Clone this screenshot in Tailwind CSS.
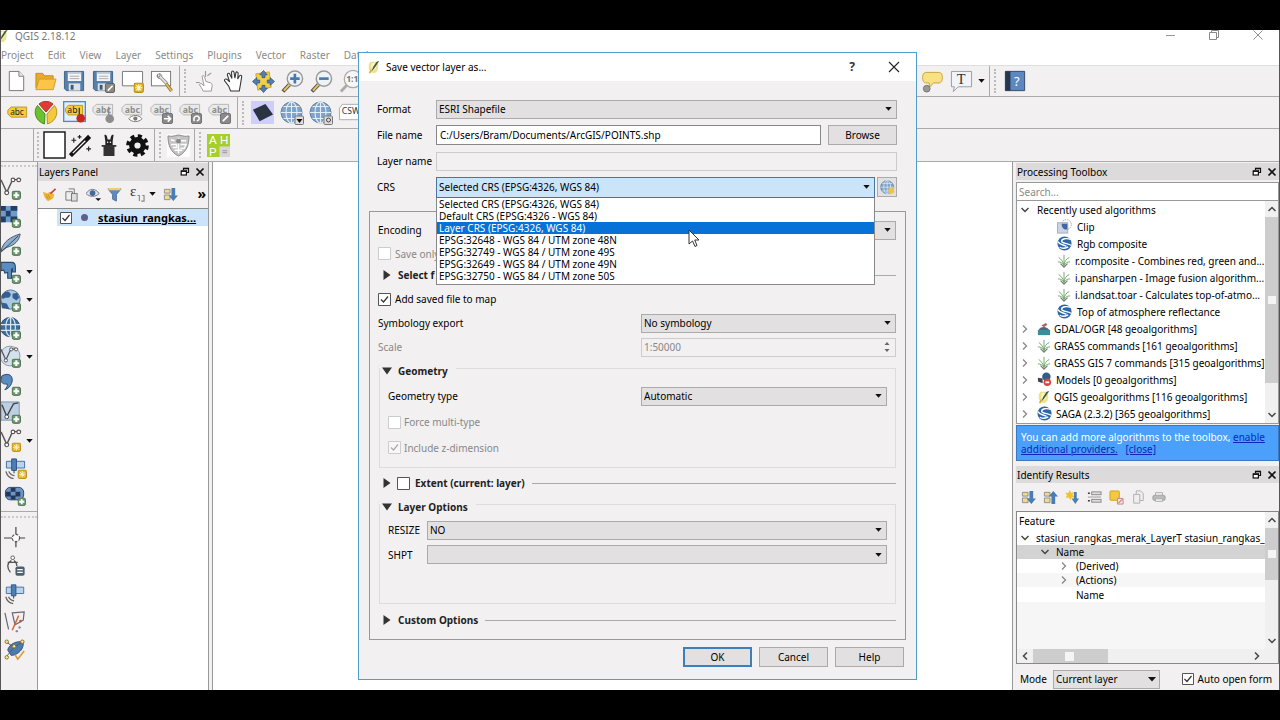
<!DOCTYPE html>
<html lang="en">
<head>
<meta charset="utf-8">
<title>QGIS 2.18.12</title>
<script src="https://cdn.jsdelivr.net/npm/@tailwindcss/browser@4"></script>
</head>
<body class="bg-black font-['Noto_Sans','Open_Sans',sans-serif] text-[10px] leading-[14px] text-black">

<svg class="hidden" aria-hidden="true">
  <symbol id="dn" viewBox="0 0 8 5"><path d="M0 0h8L4 4.6z" fill="#111"/></symbol>
  <symbol id="tri-r" viewBox="0 0 8 10"><path d="M.5 0v10L7.500 5z" fill="#333"/></symbol>
  <symbol id="tri-d" viewBox="0 0 10 8"><path d="M0 .5h10L5 7.500z" fill="#333"/></symbol>
  <symbol id="ch-r" viewBox="0 0 8 8"><path d="M2 .5l3.500 3.500L2 7.500" fill="none" stroke="#888" stroke-width="1.300"/></symbol>
  <symbol id="ch-d" viewBox="0 0 8 8"><path d="M.5 2L4 5.500 7.500 2" fill="none" stroke="#444" stroke-width="1.500"/></symbol>
  <symbol id="ch-u" viewBox="0 0 8 8"><path d="M.5 6L4 2.500 7.500 6" fill="none" stroke="#444" stroke-width="1.500"/></symbol>
  <symbol id="ch-l" viewBox="0 0 8 8"><path d="M6 .5L2.500 4 6 7.500" fill="none" stroke="#444" stroke-width="1.500"/></symbol>
  <symbol id="ch-rd" viewBox="0 0 8 8"><path d="M2 .5L5.500 4 2 7.500" fill="none" stroke="#444" stroke-width="1.500"/></symbol>
  <symbol id="close" viewBox="0 0 10 10"><path d="M1.500 1.500l7 7M8.500 1.500l-7 7" stroke="#111" stroke-width="1.700"/></symbol>
  <symbol id="float" viewBox="0 0 10 10"><path d="M3.500 3V1.500h5v4H7" fill="none" stroke="#111" stroke-width="1.200"/><path d="M3 1.500h6" stroke="#111" stroke-width="1.600"/><rect x="1.200" y="4" width="5.200" height="4" fill="#fff" stroke="#111" stroke-width="1.200"/><path d="M1 4.200h6" stroke="#111" stroke-width="1.500"/></symbol>
  <symbol id="q" viewBox="0 0 16 16"><path d="M4 2h6l3 3-1 7-3 3-5-1-2-4 0-5z" fill="#f1e08a"/><path d="M5 4l3-1 3 2-1 5-3 2-2-3z" fill="#fbf6c8"/><path d="M14 1l-3 1-4 6-2 5 3-3z" fill="#3d5b34"/><path d="M5 11l-2 4" stroke="#d2a92d" stroke-width="1.800"/></symbol>

  <symbol id="plus" viewBox="0 0 10 10"><rect x=".7" y=".7" width="8.600" height="8.600" rx="1.800" fill="#6d9a70" stroke="#4a6c49"/><path d="M5 2v6M2 5h6" stroke="#fff" stroke-width="2.200"/></symbol>
  <symbol id="star" viewBox="0 0 10 10"><rect x=".6" y=".6" width="8.800" height="8.800" rx="1.500" fill="#e3b52c" stroke="#b88a14"/><path d="M5 1.600v6.800M1.600 5h6.800M2.600 2.600l4.800 4.800M7.400 2.600L2.600 7.400" stroke="#fff6c4" stroke-width="1"/></symbol>

  <symbol id="new" viewBox="0 0 24 24"><path d="M4.500 1.500h10l5 5v15h-15z" fill="#fff" stroke="#777"/><path d="M14.500 1.500v5h5" fill="#eee" stroke="#777"/></symbol>
  <symbol id="open" viewBox="0 0 24 24"><path d="M2 19V3.500h7l2 2.500h9V10" fill="#e8a92c" stroke="#c78c1f"/><path d="M2 20.500L5.500 9.500H23l-3 11z" fill="#fbc648" stroke="#d59b25"/></symbol>
  <symbol id="save" viewBox="0 0 24 24"><path d="M1.500 1.500h20v20h-18l-2-2z" fill="#5580ac" stroke="#3f6488"/><rect x="5" y="2" width="14" height="9.500" fill="#f5f5f5"/><path d="M5 2h14v2H5z" fill="#b9c7d6"/><path d="M7 6.500h10M7 9h10" stroke="#aaa"/><rect x="6" y="14" width="12" height="7.500" fill="#dfe3e8"/><rect x="8" y="15.500" width="3" height="5" fill="#3f5a75"/></symbol>
  <symbol id="saveas" viewBox="0 0 24 24"><use href="#save"/><rect x="14" y="14" width="9.500" height="9.500" rx="1.500" fill="#8a8a85" stroke="#5f5f5a"/><path d="M16.500 21.500l5-5" stroke="#fff" stroke-width="1.600"/></symbol>
  <symbol id="composer" viewBox="0 0 24 24"><path d="M1.500 1.500h21v12l-4 3h-17z" fill="#fff" stroke="#777"/><use href="#star" x="13" y="13" width="11" height="11"/></symbol>
  <symbol id="manager" viewBox="0 0 24 24"><rect x="1.500" y="1.500" width="20" height="15" fill="#fff" stroke="#777"/><path d="M8 4.500c-1.500 2 0 4.500 2.500 4.500l6 6 2-2-6-6c0-2-2-4-3.500-3l1.500 2-1 1.500-1.500-.5z" fill="#ddd" stroke="#666" stroke-width=".8"/><path d="M17 14.500l5.500 7.500" stroke="#8b6a2a" stroke-width="3.400"/><path d="M17 14.500l5.500 7.500" stroke="#e2be59" stroke-width="1.800"/></symbol>
  <symbol id="touch" viewBox="0 0 24 24"><path d="M9.500 22c-1-3-3-5-4-7l2-1 3 2.500L8.500 7c0-1.500 2-1.800 2.400 0l1.600 5 5 1.500c1.500.8 1.500 2 1.300 3.500l-.8 5z" fill="#fff" stroke="#999"/><path d="M2 13h4M12 1v6M14 6l4-3" stroke="#999" stroke-width="1.200"/></symbol>
  <symbol id="hand" viewBox="0 0 24 24"><path d="M8 22l-2-5-4.500-6c0-2 2-2 3-1l2.500 2.500L4.500 5c0-2 2-2.200 2.700-.5L9.300 9 8.900 2.500c.2-2 2.300-2 2.600 0l.9 6 1-5.500c.5-1.600 2.600-1.200 2.400.5L15.300 9.500l2-3.500c1-1 2.700-.3 2.200 1L18.200 15 17 22z" fill="#fff" stroke="#333" stroke-width="1.100"/></symbol>
  <symbol id="pan" viewBox="0 0 24 24"><path d="M4 4l14-2 2 16-14 3z" fill="#f0cf4b" stroke="#c8a52c"/><path d="M12 .5l4 4.500h-2.500v3h-3V5H8zM12 23.500L8 19h2.500v-3h3v3H16zM.5 12L5 8v2.500h3v3H5V16zM23.500 12L19 16v-2.500h-3v-3h3V8z" fill="#557fb0" stroke="#36557c" stroke-width=".8"/></symbol>
  <symbol id="lens" viewBox="0 0 24 24"><path d="M9 15l-7 7.500" stroke="#555" stroke-width="4"/><path d="M9 15l-6 6.500" stroke="#e6c85c" stroke-width="2.200"/><circle cx="14.500" cy="9" r="8" fill="#eef3f8" stroke="#999" stroke-width="1.500"/></symbol>
  <symbol id="zin" viewBox="0 0 24 24"><use href="#lens"/><path d="M14.500 4v10M9.500 9h10" stroke="#4d79a8" stroke-width="2.800"/></symbol>
  <symbol id="zout" viewBox="0 0 24 24"><use href="#lens"/><path d="M9.500 9h10" stroke="#4d79a8" stroke-width="2.800"/></symbol>
  <symbol id="zone" viewBox="0 0 24 24"><path d="M9 15l-7 7.500" stroke="#aaa" stroke-width="3"/><circle cx="14.500" cy="9.500" r="9" fill="#f7f7f7" stroke="#aaa" stroke-width="1.300"/><text x="7.500" y="13" font-size="9" font-weight="bold" fill="#777">1:1</text></symbol>
  <symbol id="bubble" viewBox="0 0 24 24"><path d="M5 2.500h14c4.500 0 4.500 11 0 11h-6l-4 4.500-.5-4.500H5c-4.500 0-4.500-11 0-11z" fill="#f7e183" stroke="#c9a53a"/><circle cx="6" cy="19.500" r="3.500" fill="#999" stroke="#777"/></symbol>
  <symbol id="textnote" viewBox="0 0 24 24"><path d="M1.500 1.500h21v16h-14l-5 5 1-5h-3z" fill="#f0f3f8" stroke="#99a"/><text x="7" y="14.500" font-size="15" font-family="Liberation Serif, serif" fill="#333">T</text></symbol>
  <symbol id="book" viewBox="0 0 24 24"><path d="M1.500 1.500h21v21h-21z" fill="#5b88c0" stroke="#33445c"/><path d="M1.500 1.500H7v21H1.500z" fill="#26364d"/><text x="11" y="17" font-size="14" fill="#fff">?</text></symbol>

  <symbol id="tag" viewBox="0 0 24 24"><path d="M5.500 5.500h17v11h-17L2 13v-4z" fill="#f7cd38" stroke="#b8952a"/><text x="4.500" y="14" font-size="9" fill="#222">abc</text></symbol>
  <symbol id="tagg" viewBox="0 0 24 24"><path d="M4.500 3.500h17v11h-17L1 11V7z" fill="#e9e9e9" stroke="#b5b5b5"/><text x="4" y="12" font-size="9" font-weight="bold" fill="#8d8d8d">abc</text></symbol>
  <symbol id="pie" viewBox="0 0 24 24"><path d="M12 11L5 3c4-3.500 10-3.500 14 0z" fill="#e03b30" stroke="#a5352c"/><path d="M11 13L3.500 4.500C-1 10 1 20 10.500 23z" fill="#6cc22c" stroke="#4c8d20"/><path d="M13 13l7.500-8.500C25 10 23 20 13.500 23z" fill="#f5c93c" stroke="#b8952a"/></symbol>
  <symbol id="tagpin" viewBox="0 0 24 24"><rect x=".7" y=".7" width="22.600" height="20.600" fill="#e6eef6" stroke="#4a90c8" stroke-width="1.400"/><path d="M5.500 4.500h15v10h-15L2.500 11V8z" fill="#f7cd38" stroke="#b8952a"/><text x="4.500" y="13" font-size="9" fill="#222">ab</text><path d="M17 7v9" stroke="#333" stroke-width="1.400"/><circle cx="18.500" cy="18" r="4.500" fill="#c8281e"/></symbol>
  <symbol id="tag1" viewBox="0 0 24 24"><use href="#tagg"/><path d="M17.500 6v10" stroke="#888" stroke-width="1.400"/><circle cx="18.500" cy="18.500" r="4.500" fill="#8d8d8d"/></symbol>
  <symbol id="tag2" viewBox="0 0 24 24"><use href="#tagg"/><path d="M8 18.500c3.500-4.500 10.500-4.500 14 0-3.500 4-10.500 4-14 0z" fill="#fff" stroke="#777"/><circle cx="15" cy="18.300" r="2.200" fill="#777"/></symbol>
  <symbol id="sq" viewBox="0 0 24 24"><rect x="13" y="13" width="10.500" height="10.500" rx="1.500" fill="#8a8a8a" stroke="#6e6e6e"/></symbol>
  <symbol id="tag3" viewBox="0 0 24 24"><use href="#tagg"/><use href="#sq"/><path d="M14.500 18.500h6M18.500 15.500l3 3-3 3" stroke="#fff" stroke-width="1.600" fill="none"/></symbol>
  <symbol id="tag4" viewBox="0 0 24 24"><use href="#tagg"/><use href="#sq"/><path d="M16 21c-2-5 4-7 5-3.500.5 2-1 3-2.500 3" stroke="#fff" stroke-width="1.600" fill="none"/></symbol>
  <symbol id="tag5" viewBox="0 0 24 24"><use href="#tagg"/><use href="#sq"/><path d="M15.500 21l5.500-5.500" stroke="#fff" stroke-width="1.800"/></symbol>
  <symbol id="chip" viewBox="0 0 24 24"><path d="M0 0h24v24H0z" fill="#cfcdfb"/><path d="M2 9l13-6 8 11-14 7z" fill="#2b3242"/></symbol>
  <symbol id="globe" viewBox="0 0 24 24"><circle cx="11.500" cy="11.500" r="10.500" fill="#7fa3ca" stroke="#5f7f9f"/><path d="M11.500 1v21M1 11.500h21M3.500 5.500h16M3.500 17.500h16" stroke="#e5eef7" stroke-width="1.100"/><ellipse cx="11.500" cy="11.500" rx="5.500" ry="10.500" fill="none" stroke="#e5eef7" stroke-width="1.100"/></symbol>
  <symbol id="globe1" viewBox="0 0 24 24"><use href="#globe"/><rect x="15" y="15" width="8.500" height="8.500" rx="1" fill="#ddd" stroke="#777"/><path d="M16.500 18h6l-3 4z" fill="#111"/></symbol>
  <symbol id="globe2" viewBox="0 0 24 24"><use href="#globe"/><rect x="15" y="15" width="8.500" height="8.500" rx="1" fill="#ddd" stroke="#777"/><circle cx="19.500" cy="19" r="2" fill="none" stroke="#444"/></symbol>
  <symbol id="csw" viewBox="0 0 24 24"><path d="M4.500 3.500H24v16H1.500v-12z" fill="#fff" stroke="#aaa"/><text x="4" y="14" font-size="9" fill="#333">CSW</text></symbol>

  <symbol id="blank" viewBox="0 0 24 28"><rect x="1" y="1" width="21" height="26" fill="#fff" stroke="#111" stroke-width="1.400"/></symbol>
  <symbol id="wand" viewBox="0 0 24 24"><path d="M1.500 22.500L21.500 2.500" stroke="#111" stroke-width="4.500"/><path d="M4 20L17 7" stroke="#fff" stroke-width="1.300"/><path d="M5 4v5M2.500 6.500h5M11 1v4M9 3h4M20.500 13v5M18 15.500h5" stroke="#222" stroke-width="1.200"/></symbol>
  <symbol id="hat" viewBox="0 0 24 24"><path d="M4 12h16v2h-2v10H6V14H4z" fill="#333"/><path d="M8 12V8L7 1c2-1 3 1 3.500 5h3C14 2 15 0 17 1l-1 7v4z" fill="#222"/><circle cx="10.500" cy="9" r=".8" fill="#fff"/><circle cx="13.500" cy="9" r=".8" fill="#fff"/></symbol>
  <symbol id="gear" viewBox="0 0 24 24"><circle cx="12" cy="12" r="6" fill="none" stroke="#111" stroke-width="5.500"/><circle cx="12" cy="12" r="9.800" fill="none" stroke="#111" stroke-width="4" stroke-dasharray="4.200 3.500"/></symbol>
  <symbol id="shield" viewBox="0 0 24 24"><path d="M0 0h24v24H0z" fill="#fdfdfd"/><path d="M1 2c4 1 6 0 11-1 5 1 7 2 11 1 0 10-3 17-11 21C4 19 1 12 1 2z" fill="#c4c4c4" stroke="#888"/><path d="M4 6l4 1M12 4v16M4 11h6v3H6M14 7h6M14 11h6l-2 4h-4M8 17h8" stroke="#fff" stroke-width="1.500" fill="none"/><circle cx="12" cy="7.500" r="2.500" fill="#888"/></symbol>
  <symbol id="ahp" viewBox="0 0 24 24"><path d="M0 0h24v24H0z" fill="#a6cf2c"/><path d="M13 13h11v11H13z" fill="#d7d7d7"/><g fill="#fff" font-size="12" font-family="Liberation Sans, sans-serif"><text x="2" y="10.500">A</text><text x="13.500" y="10.500">H</text><text x="2" y="22.500">P</text></g><path d="M16 17.500h5M16 19.500h5" stroke="#999"/></symbol>

  <symbol id="vline" viewBox="0 0 24 24"><path d="M0 3l6 13 6-13 6-.5h3" fill="none" stroke="#555" stroke-width="1.500"/><g fill="#fff" stroke="#555" stroke-width="1.200"><circle cx="6" cy="16.500" r="2"/><circle cx="12.500" cy="3" r="1.900"/><circle cx="18.500" cy="3" r="1.900"/></g></symbol>
  <symbol id="l1" viewBox="0 0 24 24"><use href="#vline"/><use href="#plus" x="11" y="14" width="10" height="10"/></symbol>
  <symbol id="l2" viewBox="0 0 24 24"><path d="M0 1h17v17H0z" fill="#6f9bca"/><path d="M0 1h5v5H0zM10 1h7v5h-7zM5 6h5v6H5zM0 12h5v6H0zM10 12h7v6h-7z" fill="#1f3f66"/><use href="#plus" x="11" y="14" width="10" height="10"/></symbol>
  <symbol id="l3" viewBox="0 0 24 24"><path d="M0 19C2 9 10 4 20 1c-1 7-6 12-14 14z" fill="#8fb0cf" stroke="#456"/><path d="M0 20L18 3" stroke="#345"/><use href="#plus" x="11" y="14" width="10" height="10"/></symbol>
  <symbol id="l4" viewBox="0 0 24 24"><path d="M0 1.500h11c3 0 4 2 4 5v5h-3V8l-1 .5V18H7v-6l-3 .5-1-3-3 .5z" fill="#5b8cc0" stroke="#274a70" stroke-width="1.200"/><use href="#plus" x="11" y="14" width="10" height="10"/></symbol>
  <symbol id="l5" viewBox="0 0 24 24"><circle cx="10" cy="11" r="10" fill="#a9c8e4" stroke="#56799c"/><path d="M1 6c4-5 8-4 9-1s-3 5-4 4-4 3-5 0zM12 5l5-1 2 5-3 3-4-3zM0 14l6 1 3 6-8-1z" fill="#355f8c"/><use href="#plus" x="11" y="14" width="10" height="10"/></symbol>
  <symbol id="l6" viewBox="0 0 24 24"><circle cx="9.500" cy="10.500" r="10" fill="#3d6d9e" stroke="#274a70"/><path d="M10 1v20M0 8h20M0 14h20" stroke="#dbe8f4" stroke-width="1.300"/><ellipse cx="10" cy="10.500" rx="5" ry="10" fill="none" stroke="#dbe8f4" stroke-width="1.200"/><use href="#plus" x="11" y="14" width="10" height="10"/></symbol>
  <symbol id="l7" viewBox="0 0 24 24"><circle cx="9.500" cy="11.500" r="10.300" fill="#d3e1ee" stroke="#89a"/><g transform="translate(0 2) scale(.85)"><use href="#vline" width="24" height="24"/></g><use href="#plus" x="11" y="14" width="10" height="10"/></symbol>
  <symbol id="l8" viewBox="0 0 24 24"><path d="M1 3c7-4 13 0 10 8-1.500 3.500-4 5.500-7 6.500 2-2.500 3-4 2.500-6C2 12 0 10 0 7z" fill="#5b8cc0" stroke="#274a70"/><use href="#plus" x="11" y="14" width="10" height="10"/></symbol>
  <symbol id="l9" viewBox="0 0 24 24"><path d="M0 1h19v19H0z" fill="#bcd0e4" stroke="#7d96ae"/><path d="M1 4l5 12L13 3l5-1" fill="none" stroke="#444" stroke-width="1.400"/><circle cx="6" cy="16.500" r="2" fill="#fff" stroke="#444"/><use href="#plus" x="11" y="14" width="10" height="10"/></symbol>
  <symbol id="l10" viewBox="0 0 24 24"><use href="#vline"/><use href="#star" x="11" y="14" width="10" height="10"/></symbol>
  <symbol id="sat" viewBox="0 0 24 24"><path d="M2.500 4.500h19v7h-19z" fill="#b9d3ee" stroke="#456f9c"/><path d="M8 2h5v12H8z" fill="#4d7fb4" stroke="#2d5482"/><path d="M10.500 14v3" stroke="#333"/><path d="M2 15c1 4 4 7 8 7.500M5 15c1 2.500 3 4 6 4.500" fill="none" stroke="#666" stroke-width="1.400"/></symbol>
  <symbol id="l11" viewBox="0 0 24 24"><use href="#sat"/><use href="#star" x="14" y="13" width="10" height="10"/></symbol>
  <symbol id="l12" viewBox="0 0 24 24"><rect x="1.500" y="2.500" width="19" height="13" rx="5" fill="#6f94c4" stroke="#2b4468"/><path d="M7 3h5v4H7zM2 7h5v5H2zM12 7h5v5h-5zM7 11h5v4H7z" fill="#22395c"/><use href="#plus" x="14" y="13" width="9" height="9"/></symbol>
  <symbol id="m1" viewBox="0 0 24 24"><path d="M13 0v8M13 16v6M0 12h9M17 12h6" stroke="#444" stroke-width="1.300"/><circle cx="13" cy="12" r="4" fill="#fff" stroke="#555" stroke-width="1.300" stroke-dasharray="3 1.500"/></symbol>
  <symbol id="m2" viewBox="0 0 24 24"><circle cx="9.500" cy="3" r="2" fill="#fff" stroke="#555"/><path d="M8 6c-5 3-5 8-1 13M11 6c3 2 3 4 3 6M4 8h11" fill="none" stroke="#555" stroke-width="1.400"/><rect x="12.500" y="12.500" width="10" height="10" rx="2" fill="#4f5f70"/><path d="M14.500 16h6M14.500 19h6" stroke="#fff" stroke-width="1.300"/></symbol>
  <symbol id="m4" viewBox="0 0 24 24"><path d="M1 2l4 18M9 2l13-1-1 9-9 5z" fill="none" stroke="#667" stroke-width="1.300"/><path d="M16 5L9 21" stroke="#d06a3a" stroke-width="1.600"/><circle cx="18" cy="11" r="1.500" fill="#b55"/><circle cx="17" cy="18" r="1.300" fill="#88a"/><circle cx="14" cy="22" r="1.300" fill="#88a"/></symbol>
  <symbol id="m5" viewBox="0 0 24 24"><path d="M4 12C6 5 14 2 21 3c1 8-5 14-13 15z" fill="#4c7cae" stroke="#2d5482"/><path d="M2 3l9 6 10-6M2 20l9-11" stroke="#556" fill="none"/><g fill="#f8e6a0" stroke="#8a6d1f"><circle cx="3" cy="3" r="1.900"/><circle cx="20" cy="3" r="1.900"/><circle cx="11" cy="8" r="1.900"/><circle cx="3" cy="20" r="1.900"/></g><path d="M12 17l3 5 7-9" fill="none" stroke="#d99a3a" stroke-width="1.800"/></symbol>

  <symbol id="brush" viewBox="0 0 16 16"><path d="M1 5l5 2 2-2 5 3-1 4-5 3C4 14 2 10 1 5z" fill="#eeb433"/><path d="M4 9l3 4M6 8l3 4" stroke="#c98a1c"/><path d="M14.500 2L9 7" stroke="#c0493f" stroke-width="1.800"/></symbol>
  <symbol id="addgrp" viewBox="0 0 16 16"><path d="M2 5h7v9H2zM5 2h6v9" fill="#eee" stroke="#777"/><rect x="8" y="7" width="6" height="8" fill="#ddd" stroke="#777"/></symbol>
  <symbol id="eye" viewBox="0 0 16 16"><path d="M0 7c4-6 10-6 14 0-4 4-10 4-14 0z" fill="#dce4ee" stroke="#778"/><circle cx="7" cy="6.500" r="3" fill="#446a9a"/><path d="M10 12h6l-3 3z" fill="#111"/></symbol>
  <symbol id="funnel" viewBox="0 0 16 16"><path d="M1 2h14L10 8v7l-4-2V8z" fill="#5b8cc0" stroke="#47709c"/><path d="M1.500 1h13v2.500h-13z" fill="#f0d068"/></symbol>
  <symbol id="eps" viewBox="0 0 16 16"><text x="0" y="10" font-size="16" font-family="Liberation Serif, serif" fill="#333">ε</text><path d="M8 9h2v6M13 9h2v6H12" fill="none" stroke="#888" stroke-width="1.200"/></symbol>
  <symbol id="expand" viewBox="0 0 16 16"><path d="M1.500 2.500h6v4h-6zM1.500 8.500h6v5h-6z" fill="#f3da88" stroke="#8d8d8d"/><path d="M9 1h4v8h3l-5 6-5-6h3z" fill="#4b7db5"/></symbol>
  <symbol id="collapse" viewBox="0 0 16 16"><path d="M1.500 2.500h6v4h-6zM1.500 8.500h6v5h-6z" fill="#f3da88" stroke="#8d8d8d"/><path d="M9 15h4V7h3l-5-6-5 6h3z" fill="#4b7db5"/></symbol>
  <symbol id="expnew" viewBox="0 0 16 16"><path d="M5 0l1.500 3 3-.5L8 5l2 2.500-3 .5-1 3-2-3-3 .5L2 5 0 3l3.500.2z" fill="#f3c22f"/><path d="M9.500 2h3v7H15l-4 6-4-6h2.500z" fill="#4b7db5"/></symbol>
  <symbol id="listic" viewBox="0 0 16 16"><path d="M1 3.500h2M1 11.500h2" stroke="#333" stroke-width="1.500"/><rect x="5" y="2" width="10" height="3" fill="#ddd" stroke="#888"/><rect x="5" y="10" width="10" height="3" fill="#ddd" stroke="#888"/><path d="M1 7.500h14" stroke="#999"/></symbol>
  <symbol id="clr" viewBox="0 0 16 16"><rect x="1" y="1" width="10" height="10" rx="1" fill="#f3c93d" stroke="#cda12c"/><path d="M9 9h6v6H9z" fill="#f7e4e0" stroke="#b88"/><path d="M10 14l4-4" stroke="#c33"/></symbol>
  <symbol id="copy" viewBox="0 0 16 16"><path d="M3 5h7v10H3zM6 5V1h5l3 3v8h-4" fill="#eee" stroke="#aaa"/></symbol>
  <symbol id="print" viewBox="0 0 16 16"><rect x="1" y="6" width="14" height="6" rx="2" fill="#bbb" stroke="#999"/><path d="M4 3h8v3H4zM4 10h8v3H4z" fill="#eee" stroke="#aaa"/></symbol>
  <symbol id="clip" viewBox="0 0 16 16"><circle cx="10" cy="6" r="5.300" fill="#fff" stroke="#99a" stroke-dasharray="1.500 1"/><rect x=".5" y="4" width="11" height="11" fill="#ccd3e2" stroke="#aab"/><path d="M5 5h6v6c-4 1-6-2-6-6z" fill="#4466a0"/></symbol>
  <symbol id="saga" viewBox="0 0 16 16"><circle cx="8" cy="8" r="7.500" fill="#2c66a8"/><path d="M14.500 3.500C10 2 5 3 5 5.500S13 8 15 10M1 6c2 4 6 3 9 5M3 12c3 2 6 1 9-.5" fill="none" stroke="#fff" stroke-width="1.500"/></symbol>
  <symbol id="grass" viewBox="0 0 16 16"><path d="M8 13C7 9 5 6 2 4M8 13V1M8 13c0-4 3-8 6-9M8 13C6 10 4 9 1 9M8 13c2-3 4-4 7-4" fill="none" stroke="#6fa86a" stroke-width="1.100"/><path d="M4 11l4 4 4-4" fill="none" stroke="#777" stroke-width="1.300"/></symbol>
  <symbol id="gdal" viewBox="0 0 16 16"><path d="M1 9h14v6H1z" fill="#3f8a9c"/><path d="M2 9c1-4 9-5 12 0z" fill="#567"/><path d="M5 4l5-3 2 2-4 3z" fill="#a66"/></symbol>
  <symbol id="models" viewBox="0 0 16 16"><circle cx="10" cy="5" r="4.500" fill="#2c5f8c"/><circle cx="11" cy="11" r="4" fill="#d9443a"/><path d="M1 6l5 1v5l-5-2z" fill="#445"/><path d="M9 10h4v2H9z" fill="#fff"/></symbol>
</svg>

<div class="flex min-h-screen flex-col pt-[30px] pb-[30px]">
<div class="relative flex flex-1 flex-col overflow-hidden border-x border-[#555] bg-[#f2f0f1]">

  <!-- Main window title and menu -->
  <header class="bg-white">
    <div class="flex h-[12px] items-center">
      <svg class="h-[14px] w-[9px]" viewBox="7 0 9 16"><use href="#q" width="16" height="16"/></svg>
      <h1 class="ml-[5px] flex-1 text-[10px] leading-[12px] text-[#777]">QGIS 2.18.12</h1>
      <div class="flex items-center gap-[32px] pr-[15px]">
        <button aria-label="Minimize" class="flex"><svg class="h-[12px] w-[10px]" viewBox="0 0 10 12"><path d="M0 5.500h9" stroke="#999"/></svg></button>
        <button aria-label="Restore" class="flex"><svg class="h-[12px] w-[12px]" viewBox="0 0 12 12"><path d="M3.500 2V.5h7v7H8.500M1.500 2.500h7v7h-7z" fill="none" stroke="#888"/></svg></button>
        <button aria-label="Close window" class="flex"><svg class="h-[12px] w-[12px]" viewBox="0 0 12 12"><path d="M1.500 .5l9 9M10.500 .5l-9 9" stroke="#89929c"/></svg></button>
      </div>
    </div>
    <nav class="flex h-[23px] items-center gap-[14px] pt-[3px] text-[#8a8a8a]">
      <button>Project</button><button>Edit</button><button>View</button><button>Layer</button><button>Settings</button><button>Plugins</button><button>Vector</button><button>Raster</button><button>Database</button>
    </nav>
  </header>

  <!-- Toolbars -->
  <div class="flex h-[32px] items-center border-t border-b border-t-[#dedede] border-b-[#aaa] pl-[1px]">
    <button aria-label="New" class="flex w-[29px] justify-center"><svg class="size-[23px]"><use href="#new"/></svg></button>
    <button aria-label="Open" class="flex w-[29px] justify-center"><svg class="size-[23px]"><use href="#open"/></svg></button>
    <button aria-label="Save" class="flex w-[29px] justify-center"><svg class="size-[23px]"><use href="#save"/></svg></button>
    <button aria-label="Save as" class="flex w-[29px] justify-center"><svg class="size-[23px]"><use href="#saveas"/></svg></button>
    <button aria-label="New composer" class="flex w-[29px] justify-center"><svg class="size-[23px]"><use href="#composer"/></svg></button>
    <button aria-label="Composer manager" class="flex w-[29px] justify-center"><svg class="size-[23px]"><use href="#manager"/></svg></button>
    <span class="ml-[3px] h-full w-[5px] border-l border-[#aaa]"></span><span class="mr-[5px] h-[24px] w-[2px] border-l-2 border-dotted border-[#bbb]"></span>
    <button aria-label="Touch" class="flex w-[29px] justify-center"><svg class="size-[23px]"><use href="#touch"/></svg></button>
    <button aria-label="Pan" class="flex w-[29px] justify-center"><svg class="size-[23px]"><use href="#hand"/></svg></button>
    <button aria-label="Pan to selection" class="flex w-[29px] justify-center"><svg class="size-[23px]"><use href="#pan"/></svg></button>
    <button aria-label="Zoom in" class="flex w-[29px] justify-center"><svg class="size-[23px]"><use href="#zin"/></svg></button>
    <button aria-label="Zoom out" class="flex w-[29px] justify-center"><svg class="size-[23px]"><use href="#zout"/></svg></button>
    <button aria-label="Zoom native" class="flex w-[29px] justify-center"><svg class="size-[23px]"><use href="#zone"/></svg></button>
    <span class="w-[553px] shrink-0"></span>
    <button aria-label="Map tips" class="flex w-[29px] justify-center"><svg class="size-[23px]"><use href="#bubble"/></svg></button>
    <button aria-label="Text annotation" class="flex w-[29px] justify-center"><svg class="size-[23px]"><use href="#textnote"/></svg></button>
    <svg class="ml-[2px] h-[4px] w-[7px]"><use href="#dn"/></svg>
    <span class="ml-[4px] h-full w-[5px] border-l border-[#aaa]"></span><span class="mr-[4px] h-[24px] w-[2px] border-l-2 border-dotted border-[#bbb]"></span>
    <button aria-label="Help contents" class="flex w-[29px] justify-center"><svg class="size-[22px]"><use href="#book"/></svg></button>
  </div>
  <div class="flex h-[32px] items-center border-b border-[#aaa] pl-[1px]">
    <button aria-label="Labeling" class="flex w-[29px] justify-center"><svg class="size-[22px]"><use href="#tag"/></svg></button>
    <button aria-label="Diagrams" class="flex w-[29px] justify-center"><svg class="size-[24px]"><use href="#pie"/></svg></button>
    <button aria-label="Pinned labels" class="flex w-[29px] justify-center"><svg class="size-[23px]"><use href="#tagpin"/></svg></button>
    <button aria-label="Pin labels" class="flex w-[29px] justify-center"><svg class="size-[23px]"><use href="#tag1"/></svg></button>
    <button aria-label="Show labels" class="flex w-[29px] justify-center"><svg class="size-[23px]"><use href="#tag2"/></svg></button>
    <button aria-label="Move label" class="flex w-[29px] justify-center"><svg class="size-[23px]"><use href="#tag3"/></svg></button>
    <button aria-label="Rotate label" class="flex w-[29px] justify-center"><svg class="size-[23px]"><use href="#tag4"/></svg></button>
    <button aria-label="Change label" class="flex w-[29px] justify-center"><svg class="size-[23px]"><use href="#tag5"/></svg></button>
    <span class="ml-[3px] h-full w-[5px] border-l border-[#aaa]"></span><span class="mr-[4px] h-[24px] w-[2px] border-l-2 border-dotted border-[#bbb]"></span>
    <button aria-label="Raster tool" class="flex w-[29px] justify-center"><svg class="size-[23px]"><use href="#chip"/></svg></button>
    <button aria-label="Add web map" class="flex w-[29px] justify-center"><svg class="size-[24px]"><use href="#globe1"/></svg></button>
    <button aria-label="Search web map" class="flex w-[29px] justify-center"><svg class="size-[24px]"><use href="#globe2"/></svg></button>
    <button aria-label="CSW client" class="flex w-[29px] justify-center"><svg class="size-[23px]"><use href="#csw"/></svg></button>
  </div>
  <div class="flex h-[33px] items-center border-b border-[#aaa] pl-[32px]">
    <span class="h-full w-[4px] border-l border-[#aaa]"></span><span class="mr-[3px] h-[26px] w-[2px] border-l-2 border-dotted border-[#bbb]"></span>
    <button aria-label="Blank" class="flex w-[25px] justify-center"><svg class="h-[28px] w-[24px]"><use href="#blank"/></svg></button>
    <button aria-label="Wand" class="flex w-[27px] justify-center"><svg class="size-[23px]"><use href="#wand"/></svg></button>
    <button aria-label="Magic hat" class="flex w-[29px] justify-center"><svg class="size-[22px]"><use href="#hat"/></svg></button>
    <button aria-label="Settings gear" class="flex w-[29px] justify-center"><svg class="size-[23px]"><use href="#gear"/></svg></button>
    <span class="ml-[2px] h-full w-[5px] border-l border-[#aaa]"></span><span class="mr-[3px] h-[26px] w-[2px] border-l-2 border-dotted border-[#bbb]"></span>
    <button aria-label="Shield" class="flex w-[29px] justify-center"><svg class="size-[23px]"><use href="#shield"/></svg></button>
    <span class="ml-[1px] h-full w-[5px] border-l border-[#aaa]"></span><span class="mr-[3px] h-[26px] w-[2px] border-l-2 border-dotted border-[#bbb]"></span>
    <button aria-label="AHP" class="flex w-[29px] justify-center"><svg class="size-[23px]"><use href="#ahp"/></svg></button>
  </div>

  <div class="flex min-h-0 flex-1">
    <!-- Vertical toolbar -->
    <aside class="flex w-[36px] flex-col">
      <span class="mt-[3px] mb-[7px] border-t-2 border-dotted border-[#ccc]"></span>
      <div class="flex flex-1 flex-col border-b border-[#aaa]">
        <div class="flex flex-1 items-center"><svg class="size-[23px]"><use href="#l1"/></svg></div>
        <div class="flex flex-1 items-center"><svg class="size-[23px]"><use href="#l2"/></svg></div>
        <div class="flex flex-1 items-center"><svg class="size-[23px]"><use href="#l3"/></svg></div>
        <div class="flex flex-1 items-center"><svg class="size-[23px]"><use href="#l4"/></svg><svg class="ml-[2px] h-[4px] w-[7px]"><use href="#dn"/></svg></div>
        <div class="flex flex-1 items-center"><svg class="size-[23px]"><use href="#l5"/></svg><svg class="ml-[2px] h-[4px] w-[7px]"><use href="#dn"/></svg></div>
        <div class="flex flex-1 items-center"><svg class="size-[23px]"><use href="#l6"/></svg></div>
        <div class="flex flex-1 items-center"><svg class="size-[23px]"><use href="#l7"/></svg><svg class="ml-[2px] h-[4px] w-[7px]"><use href="#dn"/></svg></div>
        <div class="flex flex-1 items-center"><svg class="size-[23px]"><use href="#l8"/></svg></div>
        <div class="flex flex-1 items-center"><svg class="size-[23px]"><use href="#l9"/></svg></div>
        <div class="flex flex-1 items-center"><svg class="size-[23px]"><use href="#l10"/></svg><svg class="ml-[2px] h-[4px] w-[7px]"><use href="#dn"/></svg></div>
        <div class="flex flex-1 items-center pl-[3px]"><svg class="size-[23px]"><use href="#l11"/></svg></div>
        <div class="flex flex-1 items-center pl-[3px]"><svg class="size-[23px]"><use href="#l12"/></svg></div>
      </div>
      <span class="mt-[4px] mb-[6px] border-t-2 border-dotted border-[#ccc]"></span>
      <div class="flex flex-col pb-[26px] pl-[3px]">
        <div class="flex h-[28px] items-center"><svg class="size-[22px]"><use href="#m1"/></svg></div>
        <div class="flex h-[28px] items-center"><svg class="size-[22px]"><use href="#m2"/></svg></div>
        <div class="flex h-[28px] items-center"><svg class="size-[22px]"><use href="#sat"/></svg></div>
        <div class="flex h-[28px] items-center"><svg class="size-[22px]"><use href="#m4"/></svg></div>
        <div class="flex h-[28px] items-center"><svg class="size-[22px]"><use href="#m5"/></svg></div>
      </div>
    </aside>

    <!-- Layers panel -->
    <section class="flex w-[172px] flex-col border-x border-[#999]">
      <div class="mt-px flex h-[18px] items-center bg-[#dcdadb] pr-[3px] pl-[1px]">
        <h2 class="flex-1 text-[10px]">Layers Panel</h2>
        <button aria-label="Float layers panel"><svg class="size-[10px]"><use href="#float"/></svg></button>
        <button aria-label="Close layers panel" class="ml-[5px]"><svg class="size-[10px]"><use href="#close"/></svg></button>
      </div>
      <div class="flex h-[26px] items-center pl-[4px]">
        <svg class="size-[15px]"><use href="#brush"/></svg><svg class="ml-[7px] size-[15px]"><use href="#addgrp"/></svg><svg class="ml-[7px] size-[15px]"><use href="#eye"/></svg><svg class="ml-[6px] size-[15px]"><use href="#funnel"/></svg><svg class="ml-[8px] size-[15px]"><use href="#eps"/></svg><svg class="ml-[4px] h-[4px] w-[7px]"><use href="#dn"/></svg><svg class="ml-[7px] size-[15px]"><use href="#expand"/></svg>
        <button aria-label="More" class="ml-auto pr-[2px] text-[14px] font-bold">»</button>
      </div>
      <div class="mt-px flex-1 border-t border-[#888] bg-white pl-[19px]">
        <label class="flex h-[17px] items-center bg-[#cce4f9] pl-[3px] font-bold">
          <input type="checkbox" checked class="peer sr-only">
          <svg class="size-[12px]" viewBox="0 0 12 12"><path d="M.5.5h11v11H.5z" fill="#fff" stroke="#555"/><path d="M2.500 6l2.500 2.500L9.500 3" fill="none" stroke="#333" stroke-width="1.200"/></svg>
          <span class="mx-[9px] size-[7px] rounded-full bg-[#5f5f8c]"></span>
          <span class="ml-[1px] text-[11px] underline">stasiun_rangkas...</span>
        </label>
      </div>
    </section>

    <main class="ml-[3px] min-w-0 flex-1 border-x border-[#999] bg-white"></main>

    <!-- Right docks -->
    <aside class="flex w-[266px] flex-col pl-[3px]">
      <div class="mt-px flex h-[17px] items-center bg-[#dcdadb] pr-[2px] pl-[1px]">
        <h2 class="flex-1 text-[10px]">Processing Toolbox</h2>
        <button aria-label="Float toolbox"><svg class="size-[10px]"><use href="#float"/></svg></button>
        <button aria-label="Close toolbox" class="ml-[5px]"><svg class="size-[10px]"><use href="#close"/></svg></button>
      </div>
      <input aria-label="Search" placeholder="Search..." class="mt-[2px] h-[19px] w-full border border-[#999] bg-white px-[2px] placeholder:text-[#888]">
      <div class="flex h-[223px] border border-t-0 border-[#999] bg-white">
        <ul class="min-w-0 flex-1 overflow-hidden whitespace-nowrap">
          <li class="flex h-[17px] items-center pl-[4px]"><svg class="mr-[8px] size-[8px] shrink-0"><use href="#ch-d"/></svg>Recently used algorithms</li>
          <li class="flex h-[17px] items-center pl-[40px]"><svg class="mr-[5px] size-[15px] shrink-0"><use href="#clip"/></svg>Clip</li>
          <li class="flex h-[17px] items-center pl-[40px]"><svg class="mr-[5px] size-[15px] shrink-0"><use href="#saga"/></svg>Rgb composite</li>
          <li class="flex h-[17px] items-center pl-[40px]"><svg class="mr-[4px] size-[14px] shrink-0"><use href="#grass"/></svg>r.composite - Combines red, green and...</li>
          <li class="flex h-[17px] items-center pl-[40px]"><svg class="mr-[4px] size-[14px] shrink-0"><use href="#grass"/></svg>i.pansharpen - Image fusion algorithm...</li>
          <li class="flex h-[17px] items-center pl-[40px]"><svg class="mr-[4px] size-[14px] shrink-0"><use href="#grass"/></svg>i.landsat.toar - Calculates top-of-atmo...</li>
          <li class="flex h-[17px] items-center pl-[40px]"><svg class="mr-[5px] size-[15px] shrink-0"><use href="#saga"/></svg>Top of atmosphere reflectance</li>
          <li class="flex h-[17px] items-center pl-[4px]"><svg class="mr-[8px] size-[8px] shrink-0"><use href="#ch-r"/></svg><svg class="mr-[3px] size-[14px] shrink-0"><use href="#gdal"/></svg>GDAL/OGR [48 geoalgorithms]</li>
          <li class="flex h-[17px] items-center pl-[4px]"><svg class="mr-[8px] size-[8px] shrink-0"><use href="#ch-r"/></svg><svg class="mr-[3px] size-[14px] shrink-0"><use href="#grass"/></svg>GRASS commands [161 geoalgorithms]</li>
          <li class="flex h-[17px] items-center pl-[4px]"><svg class="mr-[8px] size-[8px] shrink-0"><use href="#ch-r"/></svg><svg class="mr-[3px] size-[14px] shrink-0"><use href="#grass"/></svg>GRASS GIS 7 commands [315 geoalgorithms]</li>
          <li class="flex h-[17px] items-center pl-[4px]"><svg class="mr-[8px] size-[8px] shrink-0"><use href="#ch-r"/></svg><svg class="mr-[4px] size-[15px] shrink-0"><use href="#models"/></svg>Models [0 geoalgorithms]</li>
          <li class="flex h-[17px] items-center pl-[4px]"><svg class="mr-[8px] size-[8px] shrink-0"><use href="#ch-r"/></svg><svg class="mr-[3px] size-[14px] shrink-0"><use href="#q"/></svg>QGIS geoalgorithms [116 geoalgorithms]</li>
          <li class="flex h-[17px] items-center pl-[4px]"><svg class="mr-[8px] size-[8px] shrink-0"><use href="#ch-r"/></svg><svg class="mr-[4px] size-[15px] shrink-0"><use href="#saga"/></svg>SAGA (2.3.2) [365 geoalgorithms]</li>
        </ul>
        <div class="flex w-[13px] flex-col items-center bg-[#f0f0f0] py-[4px]">
          <svg class="size-[8px]"><use href="#ch-u"/></svg>
          <span class="mt-[4px] flex h-[166px] w-full flex-col items-center bg-[#cdcdcd] pt-[79px]"><span class="size-[8px] bg-[#f4f4f4]"></span></span>
          <svg class="mt-auto size-[8px]"><use href="#ch-d"/></svg>
        </div>
      </div>
      <p class="mt-px h-[36px] border border-[#3b78bd] bg-[#4aa0fb] pt-[5px] pl-[4px] leading-[12px] whitespace-nowrap text-white">You can add more algorithms to the toolbox, <a href="#enable" class="text-[#1226b8] underline">enable<br>additional providers.</a> &nbsp; <a href="#close-tip" class="text-[#1226b8] underline">[close]</a></p>
      <div class="mt-[5px] flex h-[17px] items-center bg-[#dcdadb] pr-[2px] pl-[1px]">
        <h2 class="flex-1 text-[10px]">Identify Results</h2>
        <button aria-label="Float results"><svg class="size-[10px]"><use href="#float"/></svg></button>
        <button aria-label="Close results" class="ml-[5px]"><svg class="size-[10px]"><use href="#close"/></svg></button>
      </div>
      <div class="flex h-[28px] items-center gap-[7px] pl-[5px]">
        <svg class="size-[15px]"><use href="#expand"/></svg><svg class="size-[15px]"><use href="#collapse"/></svg><svg class="size-[15px]"><use href="#expnew"/></svg><svg class="size-[15px]"><use href="#listic"/></svg><svg class="size-[15px]"><use href="#clr"/></svg><svg class="size-[14px]"><use href="#copy"/></svg><svg class="size-[14px]"><use href="#print"/></svg>
      </div>
      <div class="flex min-h-0 flex-1 flex-col border border-[#888] bg-white">
        <div class="flex min-h-0 flex-1">
          <div class="flex min-w-0 flex-1 flex-col overflow-hidden whitespace-nowrap">
            <p class="h-[19px] pt-[2px] pl-[2px]">Feature</p>
            <ul class="flex min-h-0 flex-1 flex-col">
              <li class="flex h-[14px] shrink-0 items-center pl-[4px]"><svg class="mr-[7px] size-[8px] shrink-0"><use href="#ch-d"/></svg>stasiun_rangkas_merak_LayerT stasiun_rangkas_</li>
              <li class="flex h-[14px] shrink-0 items-center bg-[#d3d3d3] pl-[24px]"><svg class="mr-[7px] size-[8px]"><use href="#ch-d"/></svg>Name</li>
              <li class="flex h-[14px] shrink-0 items-center pl-[43px]"><svg class="mr-[8px] size-[8px]"><use href="#ch-r"/></svg>(Derived)</li>
              <li class="flex h-[14px] shrink-0 items-center bg-[#f6f6f6] pl-[43px]"><svg class="mr-[8px] size-[8px]"><use href="#ch-r"/></svg>(Actions)</li>
              <li class="flex h-[15px] shrink-0 items-center pl-[59px]">Name</li>
              <li class="min-h-0 flex-1 bg-[#f6f6f6]"></li>
            </ul>
          </div>
          <div class="flex w-[13px] flex-col items-center bg-[#f0f0f0] py-[4px]">
            <svg class="size-[8px]"><use href="#ch-u"/></svg>
            <span class="mt-[4px] flex h-[52px] w-full flex-col items-center bg-[#cdcdcd] pt-[22px]"><span class="size-[8px] bg-[#f4f4f4]"></span></span>
            <svg class="mt-auto size-[8px]"><use href="#ch-d"/></svg>
          </div>
        </div>
        <div class="flex h-[14px] items-center bg-[#f0f0f0] pl-[4px]">
          <svg class="size-[8px]"><use href="#ch-l"/></svg>
          <span class="ml-[4px] flex h-full w-[75px] items-center bg-[#cdcdcd] pl-[32px]"><span class="size-[9px] bg-[#f4f4f4]"></span></span>
          <svg class="mr-[17px] ml-auto size-[8px]"><use href="#ch-rd"/></svg>
        </div>
      </div>
      <div class="flex h-[26px] items-center pt-[4px] pr-[7px] pl-[4px]">
        <label for="mode">Mode</label>
        <div class="relative ml-[6px] w-[107px]">
          <select id="mode" class="h-[19px] w-full appearance-none border border-[#aaa] bg-[#e2e0e1] px-[2px] leading-[14px]"><option>Current layer</option></select>
          <svg class="pointer-events-none absolute top-[7px] right-[4px] h-[5px] w-[8px]"><use href="#dn"/></svg>
        </div>
        <label class="ml-auto flex items-center gap-[4px]"><input type="checkbox" checked class="sr-only"><svg class="size-[12px]" viewBox="0 0 12 12"><path d="M.5.5h11v11H.5z" fill="#fff" stroke="#555"/><path d="M2.500 6l2.500 2.500L9.500 3" fill="none" stroke="#333" stroke-width="1.200"/></svg>Auto open form</label>
      </div>
    </aside>
  </div>
</div>
</div>

<!-- Save dialog window -->
<div role="dialog" aria-labelledby="dlg" class="absolute top-[52px] left-[358px] w-[559px] border border-[#4f9dca] bg-[#f2f0f1] pb-[12px]">
  <div class="flex h-[28px] items-center bg-white pr-[16px] pl-[8px]">
    <svg class="size-[14px]"><use href="#q"/></svg>
    <h2 id="dlg" class="ml-[5px] flex-1 text-[10px]">Save vector layer as...</h2>
    <button aria-label="What's this" class="mr-[33px] text-[12px] font-bold text-[#333]">?</button>
    <button aria-label="Close dialog"><svg class="size-[12px]" viewBox="0 0 12 12"><path d="M1 1l10 10M11 1L1 11" stroke="#222" stroke-width="1.100"/></svg></button>
  </div>
  <form class="pt-[15px]">
    <div class="grid grid-cols-[59px_1fr] pr-[19px] pl-[18px]">
      <label for="fmt" class="flex h-[26px] items-center">Format</label>
      <div class="relative flex items-center">
        <select id="fmt" class="h-[19px] w-full appearance-none border border-[#aaa] bg-[#e2e0e1] px-[2px] leading-[14px]"><option>ESRI Shapefile</option></select>
        <svg class="pointer-events-none absolute right-[5px] h-[4px] w-[7px]"><use href="#dn"/></svg>
      </div>
      <label for="file" class="flex h-[26px] items-center">File name</label>
      <div class="flex items-center gap-[7px]">
        <input id="file" value="C:/Users/Bram/Documents/ArcGIS/POINTS.shp" class="h-[20px] min-w-0 flex-1 border border-[#888] bg-white px-[3px]">
        <button type="button" class="h-[20px] w-[69px] border border-[#aaa] bg-[#e2e0e1]">Browse</button>
      </div>
      <label for="lname" class="flex h-[26px] items-center whitespace-nowrap">Layer name</label>
      <div class="flex items-center"><input id="lname" disabled class="h-[19px] w-full border border-[#ccc] bg-[#f2f0f1]"></div>
      <label for="crs" class="flex h-[26px] items-center">CRS</label>
      <div class="flex items-center gap-[2px]">
        <div class="relative flex flex-1 items-center">
          <select id="crs" class="h-[21px] w-full appearance-none border border-[#47789c] bg-[#cce4f7] px-[2px] leading-[14px]"><option>Selected CRS (EPSG:4326, WGS 84)</option></select>
          <svg class="pointer-events-none absolute right-[5px] h-[4px] w-[7px]"><use href="#dn"/></svg>
          <ul role="listbox" aria-label="CRS choices" class="absolute top-full right-0 left-0 z-10 border border-t-0 border-[#888] bg-white pb-[2px] leading-[12px]">
            <li role="option" class="px-[2px]">Selected CRS (EPSG:4326, WGS 84)</li>
            <li role="option" class="px-[2px]">Default CRS (EPSG:4326 - WGS 84)</li>
            <li role="option" aria-selected="true" class="bg-[#0672d8] px-[2px] text-white">Layer CRS (EPSG:4326, WGS 84)</li>
            <li role="option" class="px-[2px]">EPSG:32648 - WGS 84 / UTM zone 48N</li>
            <li role="option" class="px-[2px]">EPSG:32749 - WGS 84 / UTM zone 49S</li>
            <li role="option" class="px-[2px]">EPSG:32649 - WGS 84 / UTM zone 49N</li>
            <li role="option" class="px-[2px]">EPSG:32750 - WGS 84 / UTM zone 50S</li>
          </ul>
          <svg class="absolute top-[52px] left-[252px] z-20 h-[19px] w-[12px]" viewBox="0 0 12 19"><path d="M1 1v14l3.500-3 2.500 5.500 2-1L6.700 11H11z" fill="#fff" stroke="#333"/></svg>
        </div>
        <button type="button" aria-label="Select CRS" class="flex size-[20px] items-center justify-center border border-[#aaa] bg-[#e2e0e1]"><svg class="size-[15px]" viewBox="0 0 24 24"><use href="#globe"/><path d="M13 14l9-3 1 9-8 3z" fill="#ecc542"/></svg></button>
      </div>
    </div>

    <div class="mx-[10px] mt-[11px] border border-[#999] pt-[5px] pr-[9px] pl-[8px]">
      <div class="flex h-[26px] items-center"><label for="enc" class="w-[58px]">Encoding</label>
        <div class="relative flex flex-1 items-center"><select id="enc" class="h-[19px] w-full appearance-none border border-[#aaa] bg-[#e2e0e1] px-[2px]"><option>System</option></select><svg class="pointer-events-none absolute right-[5px] h-[4px] w-[7px]"><use href="#dn"/></svg></div>
      </div>
      <label class="flex h-[21px] items-center gap-[4px] text-[#888]"><input type="checkbox" disabled class="sr-only"><svg class="size-[13px]" viewBox="0 0 13 13"><path d="M.5.5h12v12H.5z" fill="#fff" stroke="#ccc"/></svg>Save only</label>
      <div class="flex h-[22px] items-center font-bold text-[#222]"><svg class="mr-[7px] ml-[5px] h-[10px] w-[8px]"><use href="#tri-r"/></svg><span class="shrink-0">Select f</span><span class="ml-[8px] flex-1 border-t border-[#aaa]"></span></div>
      <label class="flex h-[26px] items-center gap-[4px]"><input type="checkbox" checked class="sr-only"><svg class="size-[13px]" viewBox="0 0 13 13"><path d="M.5.5h12v12H.5z" fill="#fff" stroke="#555"/><path d="M3 6.500L5.500 9 10 3.500" fill="none" stroke="#333" stroke-width="1.200"/></svg>Add saved file to map</label>
      <div class="flex h-[22px] items-center"><label for="sym" class="flex-1">Symbology export</label>
        <div class="relative flex w-[255px] items-center"><select id="sym" class="h-[19px] w-full appearance-none border border-[#aaa] bg-[#e2e0e1] px-[2px] leading-[14px]"><option>No symbology</option></select><svg class="pointer-events-none absolute right-[5px] h-[4px] w-[7px]"><use href="#dn"/></svg></div>
      </div>
      <div class="flex h-[26px] items-center text-[#888]"><label for="scale" class="flex-1">Scale</label>
        <div class="relative flex w-[255px] items-center"><input id="scale" disabled value="1:50000" class="h-[19px] w-full border border-[#ccc] bg-[#f2f0f1] px-[2px]"><svg class="absolute right-[5px] h-[12px] w-[8px]" viewBox="0 0 8 12"><path d="M1.500 4L4 1l2.500 3zM1.500 8L4 11l2.500-3z" fill="#666"/></svg></div>
      </div>

      <fieldset class="ml-px border border-[#dcdcdc] px-[8px] pt-[7px] pb-[7px]">
        <legend class="-ml-[8px] flex h-[16px] items-center gap-[6px] pt-[6px] pr-[8px] font-bold text-[#222]"><svg class="ml-[2px] h-[8px] w-[10px]"><use href="#tri-d"/></svg>Geometry</legend>
        <div class="flex h-[26px] items-center"><label for="gt" class="flex-1">Geometry type</label>
          <div class="relative flex w-[246px] items-center"><select id="gt" class="h-[19px] w-full appearance-none border border-[#aaa] bg-[#e2e0e1] px-[2px] leading-[14px]"><option>Automatic</option></select><svg class="pointer-events-none absolute right-[5px] h-[4px] w-[7px]"><use href="#dn"/></svg></div>
        </div>
        <label class="flex h-[26px] items-center gap-[3px] text-[#888]"><input type="checkbox" disabled class="sr-only"><svg class="size-[13px]" viewBox="0 0 13 13"><path d="M.5.5h12v12H.5z" fill="#fff" stroke="#ccc"/></svg>Force multi-type</label>
        <label class="flex h-[25px] items-center gap-[3px] text-[#888]"><input type="checkbox" checked disabled class="sr-only"><svg class="size-[13px]" viewBox="0 0 13 13"><path d="M.5.5h12v12H.5z" fill="#f8f8f8" stroke="#ccc"/><path d="M3 6.500L5.500 9 10 3.500" fill="none" stroke="#aaa" stroke-width="1.200"/></svg>Include z-dimension</label>
      </fieldset>

      <label class="mt-[4px] flex h-[22px] items-center font-bold text-[#222]"><svg class="mr-[6px] ml-[5px] h-[10px] w-[8px]"><use href="#tri-r"/></svg><input type="checkbox" class="sr-only"><svg class="mr-[5px] size-[13px]" viewBox="0 0 13 13"><path d="M.5.5h12v12H.5z" fill="#fff" stroke="#555"/></svg>Extent (current: layer)<span class="ml-[7px] flex-1 border-t border-[#aaa]"></span></label>

      <fieldset class="mt-[2px] ml-px border border-[#dcdcdc] px-[8px] pt-[6px] pb-[36px]">
        <legend class="-ml-[8px] flex h-[16px] items-center gap-[6px] pt-[6px] pr-[8px] font-bold text-[#222]"><svg class="ml-[2px] h-[8px] w-[10px]"><use href="#tri-d"/></svg>Layer Options</legend>
        <div class="flex h-[24px] items-center"><label for="rs" class="w-[39px]">RESIZE</label>
          <div class="relative flex flex-1 items-center"><select id="rs" class="h-[19px] w-full appearance-none border border-[#aaa] bg-[#e2e0e1] px-[2px] leading-[14px]"><option>NO</option></select><svg class="pointer-events-none absolute right-[5px] h-[4px] w-[7px]"><use href="#dn"/></svg></div>
        </div>
        <div class="flex h-[25px] items-center"><label for="shpt" class="w-[39px]">SHPT</label>
          <div class="relative flex flex-1 items-center"><select id="shpt" class="h-[19px] w-full appearance-none border border-[#aaa] bg-[#e2e0e1] px-[2px] leading-[14px]"><option></option></select><svg class="pointer-events-none absolute right-[5px] h-[4px] w-[7px]"><use href="#dn"/></svg></div>
        </div>
      </fieldset>
      <div class="mt-[5px] mb-[8px] flex h-[22px] items-center font-bold text-[#222]"><svg class="mr-[7px] ml-[5px] h-[10px] w-[8px]"><use href="#tri-r"/></svg>Custom Options<span class="ml-[7px] flex-1 border-t border-[#aaa]"></span></div>
    </div>

    <div class="mt-[7px] flex justify-end gap-[7px] pr-[12px]">
      <button type="button" class="h-[20px] w-[69px] border-2 border-[#3d7fb8] bg-[#e2e0e1]">OK</button>
      <button type="button" class="h-[20px] w-[69px] border border-[#aaa] bg-[#e2e0e1]">Cancel</button>
      <button type="button" class="h-[20px] w-[69px] border border-[#aaa] bg-[#e2e0e1]">Help</button>
    </div>
  </form>
</div>
</body>
</html>
